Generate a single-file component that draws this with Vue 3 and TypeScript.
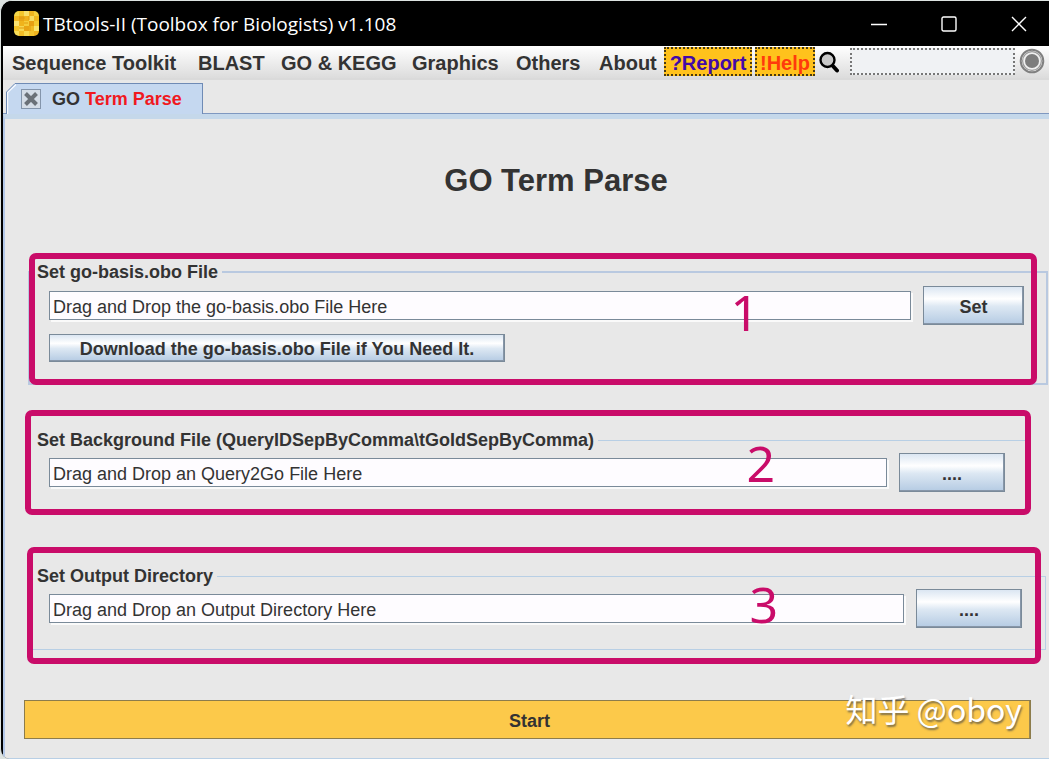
<script setup lang="ts">
import { ref } from 'vue'

const menus: string[] = ['Sequence Toolkit', 'BLAST', 'GO & KEGG', 'Graphics', 'Others', 'About']

const oboFile = ref('Drag and Drop the go-basis.obo File Here')
const backgroundFile = ref('Drag and Drop an Query2Go File Here')
const outputDir = ref('Drag and Drop an Output Directory Here')
const query = ref('')

const tiles: string[] = [
  '#f6d84a', '#f3c62c', '#f8e06a', '#eeb41f', '#f5cf3d',
  '#f2b822', '#e9a516', '#f0b21c', '#f7dc60', '#efb820',
  '#f9e270', '#f0b31b', '#f5cc3a', '#e8a012', '#f4c930',
  '#f3c228', '#f6d650', '#e9a414', '#f1ba22', '#f9e46c',
  '#f8dd58', '#f1bc26', '#f7d84e', '#f3c42e', '#f0b41e',
]
</script>

<template>
  <div class="window">
    <header class="titlebar">
      <svg class="logo" viewBox="0 0 25 25" aria-hidden="true">
        <defs>
          <clipPath id="logo-clip"><rect width="25" height="25" rx="5" /></clipPath>
        </defs>
        <g clip-path="url(#logo-clip)">
          <rect
            v-for="(c, i) in tiles"
            :key="i"
            :x="(i % 5) * 5"
            :y="Math.floor(i / 5) * 5"
            width="5"
            height="5"
            :fill="c"
          />
          <path d="M5 7h6M15 5v4M10 12h4M5 17h5M16 14v6" stroke="#e09c10" stroke-width="1" fill="none" />
        </g>
      </svg>
      <span class="app-name">TBtools-II (Toolbox for Biologists) v1.108</span>
      <div class="controls">
        <button type="button" aria-label="Minimize">
          <svg viewBox="0 0 16 16"><path d="M0 8.5h16" /></svg>
        </button>
        <button type="button" aria-label="Maximize">
          <svg viewBox="0 0 16 16"><rect x="1" y="1" width="14" height="14" rx="1.5" /></svg>
        </button>
        <button type="button" aria-label="Close">
          <svg viewBox="0 0 16 16"><path d="M1 1l14 14M15 1L1 15" /></svg>
        </button>
      </div>
    </header>

    <nav class="menubar">
      <div class="menus">
        <button v-for="m in menus" :key="m" type="button">{{ m }}</button>
      </div>
      <button type="button" class="flag report">?Report</button>
      <button type="button" class="flag help">!Help</button>
      <svg class="magnifier" viewBox="0 0 20 22" aria-hidden="true">
        <path d="M13 14l5 5.5" stroke="#000" stroke-width="4" stroke-linecap="round" />
        <circle cx="8.5" cy="9" r="7" fill="#c9c9c9" stroke="#000" stroke-width="2.4" />
      </svg>
      <input v-model="query" class="search" type="text" aria-label="Search" />
      <svg class="record" viewBox="0 0 26 26" aria-hidden="true">
        <circle cx="13" cy="13" r="11.3" fill="#f0f0f0" stroke="#808080" stroke-width="2" />
        <circle cx="13" cy="13" r="9.4" fill="none" stroke="#999" stroke-width="1.2" />
        <circle cx="13" cy="13" r="7" fill="#7d7d7d" />
      </svg>
    </nav>

    <div class="tabs">
      <div class="tab">
        <svg class="tab-edge" viewBox="0 0 10 31" aria-hidden="true">
          <path d="M0.5 31V9L9 0.5H10V31z" fill="#c5d8f0" />
          <path d="M1.5 31V9.5L10 1.5" fill="none" stroke="#f5f9ff" stroke-width="1.5" />
          <path d="M0.5 31V9L9 0.5H10" fill="none" stroke="#6f8bb5" />
        </svg>
        <div class="tab-body">
          <button type="button" class="tab-close" aria-label="Close tab">
            <svg viewBox="0 0 20 20">
              <rect x="0.5" y="0.5" width="19" height="19" fill="#d5dde7" stroke="#8495ab" />
              <path d="M4.5 4.5l11 11M15.5 4.5l-11 11" stroke="#6b7178" stroke-width="4" />
            </svg>
          </button>
          <span class="tab-label">GO <em>Term Parse</em></span>
        </div>
      </div>
    </div>

    <main class="content">
      <h1>GO Term Parse</h1>

      <section class="panel panel-obo">
        <fieldset>
          <legend><label for="obo">Set go-basis.obo File</label></legend>
          <div class="row">
            <input id="obo" v-model="oboFile" class="field" type="text" />
            <button type="button" class="metal set">Set</button>
          </div>
          <button type="button" class="metal download">Download the go-basis.obo File if You Need It.</button>
        </fieldset>
        <div class="mark"><span>1</span></div>
      </section>

      <section class="panel panel-background">
        <fieldset>
          <legend><label for="background">Set Background File (QueryIDSepByComma\tGoIdSepByComma)</label></legend>
          <div class="row">
            <input id="background" v-model="backgroundFile" class="field" type="text" />
            <button type="button" class="metal browse">....</button>
          </div>
        </fieldset>
        <div class="mark"><span>2</span></div>
      </section>

      <section class="panel panel-output">
        <fieldset>
          <legend><label for="output">Set Output Directory</label></legend>
          <div class="row">
            <input id="output" v-model="outputDir" class="field" type="text" />
            <button type="button" class="metal browse">....</button>
          </div>
        </fieldset>
        <div class="mark"><span>3</span></div>
      </section>

      <div class="start-row">
        <button type="button" class="start">Start</button>
        <span class="watermark">知乎 @oboy</span>
      </div>
    </main>
  </div>
</template>

<style>
body {
  margin: 0;
  background: #dde3e1;
}
</style>

<style scoped>
.window,
.window * {
  box-sizing: border-box;
}
.window {
  display: flex;
  flex-direction: column;
  min-height: 100vh;
  border-top: 1px solid #dde3e1;
  border-left: 1px solid #dde3e1;
  background: #000;
  border-radius: 12px 0 0 10px;
  padding-left: 2px;
  overflow: hidden;
  font-family: "Liberation Sans", Arial, sans-serif;
  font-size: 18px;
  color: #333;
}
button,
input {
  font: inherit;
  color: inherit;
  margin: 0;
  border-radius: 0;
  outline: none;
}
button {
  padding: 0;
  border: 0;
  background: none;
  font-weight: bold;
  white-space: nowrap;
}
svg {
  display: block;
  flex: none;
}

.titlebar {
  display: flex;
  align-items: center;
  height: 45px;
  padding-left: 11px;
  background: #000;
  color: #fff;
}
.logo {
  width: 25px;
  height: 25px;
}
.app-name {
  flex: 1;
  margin-left: 4px;
  font-family: "Open Sans", "Noto Sans", sans-serif;
  font-size: 19px;
  line-height: 24px;
  white-space: nowrap;
}
.controls {
  display: flex;
}
.controls button {
  display: flex;
  align-items: center;
  justify-content: center;
  width: 70px;
  height: 45px;
}
.controls button:last-child {
  width: 60px;
  margin-left: 5px;
}
.controls svg {
  width: 16px;
  height: 16px;
  fill: none;
  stroke: #fff;
  stroke-width: 1.4;
}

.menubar {
  display: flex;
  align-items: center;
  height: 34px;
  padding: 0 4px 2px 9px;
  border-bottom: 2px solid #dadada;
  background: linear-gradient(#fff, #dcdcdc);
  font-size: 20px;
}
.menus {
  flex: none;
  display: grid;
  grid-template-columns: 186px 83px 131px 104px 83px 65px;
}
.menus button {
  padding-top: 4px;
  text-align: left;
  line-height: 24px;
}
.flag {
  flex: none;
  height: 29px;
  padding-top: 3px;
  border: 2px dotted #4a3a10;
  background: #ffc21c;
}
.report {
  width: 88px;
  color: #430aa8;
}
.help {
  width: 60px;
  margin-left: 3px;
  color: #ff3a0c;
}
.magnifier {
  width: 20px;
  height: 22px;
  margin-top: 2px;
  margin-left: 4px;
}
.search {
  flex: 1;
  min-width: 0;
  height: 27px;
  margin: 0 4px 0 11px;
  padding: 0 4px;
  border: 2px dotted #777;
  background: #f0f2f4;
}
.record {
  width: 26px;
  height: 26px;
}

.tabs {
  display: flex;
  padding: 3px 0 0 3px;
  background: #e8e8e8;
  border-bottom: 1px solid #7f98c0;
}
.tab {
  display: flex;
  height: 31px;
  margin-bottom: -1px;
}
.tab-edge {
  width: 10px;
  height: 31px;
}
.tab-body {
  display: flex;
  align-items: center;
  padding: 0 20px 0 5px;
  background: #c5d8f0;
  border-top: 1px solid #6f8bb5;
  border-right: 1px solid #6f8bb5;
}
.tab-close svg {
  width: 20px;
  height: 20px;
}
.tab-label {
  margin-left: 11px;
  font-weight: bold;
  line-height: 22px;
  white-space: nowrap;
}
.tab-label em {
  color: #f0191f;
  font-style: normal;
}

.content {
  flex: 1;
  display: flex;
  flex-direction: column;
  border-left: 2px solid #b4c8e8;
  border-top: 5px solid #c5d8ea;
  border-bottom: 1px solid #b8cfe5;
  background: #e8e8e8;
}
h1 {
  margin: 44px 0 0;
  padding-left: 58px;
  font-size: 31px;
  line-height: 36px;
  text-align: center;
}

.panel {
  position: relative;
  margin-left: 23px;
}
.panel-obo {
  margin-top: 62px;
  margin-right: 1px;
}
.panel-background {
  margin-top: 44px;
  margin-right: 20px;
}
.panel-output {
  margin-top: 51px;
  margin-right: 3px;
}
fieldset {
  min-width: 0;
  margin: 0;
  padding: 2px 23px 21px 20px;
  border: 1px solid #b8cfe5;
}
.panel-obo fieldset {
  border-width: 2px;
  border-color: #b9c9e0;
  padding: 3px 22px 21px 19px;
}
legend {
  margin-left: -18px;
  padding: 0 4px 0 6px;
  font-weight: bold;
  line-height: 22px;
}
.row {
  display: flex;
  align-items: center;
  gap: 12px;
}
.field {
  flex: 1;
  min-width: 0;
  height: 29px;
  padding: 3px 3px 0;
  border: 1px solid #7a8a99;
  background: #fefcff;
  box-shadow: 2px 2px 0 #fafafa;
}
.metal {
  flex: none;
  border: 1px solid #7a8a99;
  box-shadow: inset -1px -1px 0 #8796a8;
  background: linear-gradient(#dbe6f2 0%, #fff 32%, #dde8f3 52%, #b5cbe3 100%);
}
.set {
  width: 101px;
  height: 39px;
  padding-top: 4px;
}
.browse {
  width: 106px;
  height: 39px;
  padding-top: 4px;
}
.download {
  display: block;
  width: 456px;
  height: 28px;
  margin-top: 9px;
  padding-top: 3px;
}

.mark {
  position: absolute;
  border: 6px solid #c90c69;
  border-radius: 7px;
  color: #c90c69;
  font-family: "Noto Sans", "Open Sans", sans-serif;
  font-size: 50px;
  line-height: 50px;
  pointer-events: none;
}
.mark span {
  position: absolute;
}
.panel-obo .mark {
  inset: -8px 11px 0 1px;
}
.panel-obo .mark span {
  right: 272px;
  top: 28px;
}
.panel-background .mark {
  inset: -19px -2px -1px -3px;
}
.panel-background .mark span {
  right: 250px;
  top: 22px;
}
.panel-output .mark {
  inset: -18px 5px -14px -1px;
}
.panel-output .mark span {
  right: 257px;
  top: 26px;
}

.start-row {
  position: relative;
  display: flex;
  margin: 50px 18px 18px 19px;
}
.start {
  flex: 1;
  height: 39px;
  padding: 3px 0 0 4px;
  border: 1px solid #8c7c4c;
  box-shadow: inset -1px 0 0 #9c8850;
  background: #fcc94a;
}
.watermark {
  position: absolute;
  right: 9px;
  bottom: 11px;
  color: #fff;
  font-family: "Noto Sans CJK SC", sans-serif;
  font-size: 32px;
  line-height: 40px;
  text-shadow: 1px 2px 2px rgba(70, 70, 70, 0.7);
  white-space: nowrap;
  pointer-events: none;
}
</style>
